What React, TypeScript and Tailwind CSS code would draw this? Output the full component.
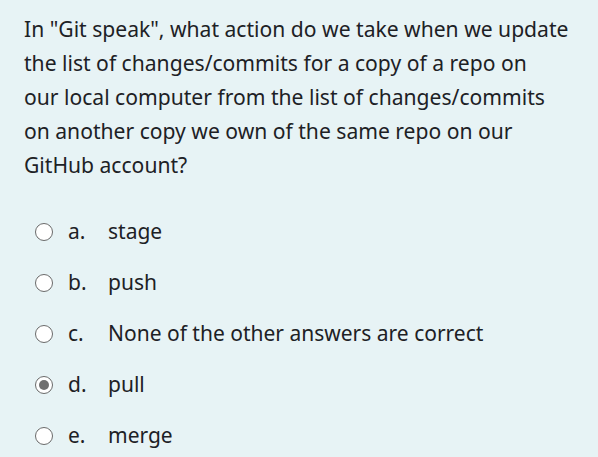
export default function App() {
  const options = [
    { letter: "a.", text: "stage", checked: false },
    { letter: "b.", text: "push", checked: false },
    { letter: "c.", text: "None of the other answers are correct", checked: false },
    { letter: "d.", text: "pull", checked: true },
    { letter: "e.", text: "merge", checked: false },
  ];

  return (
    <div
      className="w-[598px] h-[457px] bg-[#e7f3f5] text-[#1d2125] overflow-hidden"
      style={{ fontFamily: '"Noto Sans", "Open Sans", sans-serif' }}
    >
      <div className="pl-6 pr-2 pt-[12px] text-[21.1px] leading-[34px] whitespace-nowrap">
        In "Git speak", what action do we take when we update
        <br />
        the list of changes/commits for a copy of a repo on
        <br />
        our local computer from the list of changes/commits
        <br />
        on another copy we own of the same repo on our
        <br />
        GitHub account?
      </div>
      <div className="mt-[24px] pl-[35px] flex flex-col">
        {options.map((o) => (
          <div key={o.letter} className="flex items-center h-[51px] text-[21px]">
            <span className="w-[18px] h-[18px] rounded-full border-[1.5px] border-[#6a6a6a] bg-white flex items-center justify-center">
              {o.checked && <span className="w-[10px] h-[10px] rounded-full bg-[#6f6f6f]" />}
            </span>
            <span className="ml-[15px] w-[40px]">{o.letter}</span>
            <span>{o.text}</span>
          </div>
        ))}
      </div>
    </div>
  );
}
